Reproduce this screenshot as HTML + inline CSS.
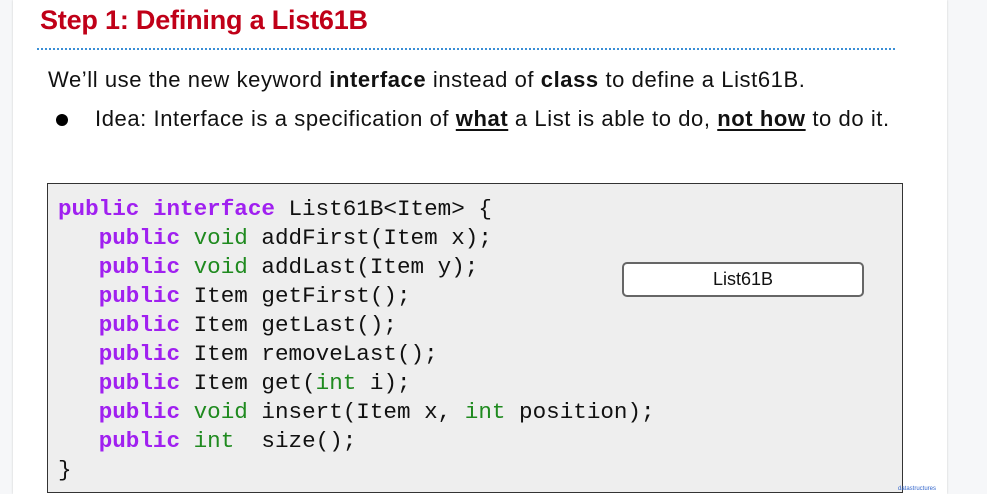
<!DOCTYPE html>
<html><head><meta charset="utf-8"><style>
html,body{margin:0;padding:0;}
body{width:987px;height:494px;background:#f6f7f9;position:relative;overflow:hidden;font-family:"Liberation Sans",sans-serif;}
.page{position:absolute;left:13px;top:0;width:934px;height:494px;background:#fff;box-shadow:0 0 2px #ccc;}
.title{position:absolute;left:40px;top:5px;color:#c00018;font-weight:bold;font-size:27px;letter-spacing:-0.2px;}
.dots{position:absolute;left:37px;top:48px;width:858px;border-top:2px dotted #3a8fd6;}
.t1{position:absolute;left:48px;top:67px;font-size:22px;letter-spacing:0.58px;color:#111;white-space:nowrap;}
.t2{position:absolute;left:95px;top:106px;font-size:22px;letter-spacing:0.58px;color:#111;white-space:nowrap;}
.bul{position:absolute;left:56px;top:114px;width:12px;height:12px;border-radius:50%;background:#000;}
u{text-decoration-thickness:2px;text-underline-offset:3px;}
.code{position:absolute;left:47px;top:183px;width:854px;height:308px;background:#eee;border:1px solid #333;}
pre{margin:0;position:absolute;left:10px;top:11px;font-family:"Liberation Mono",monospace;font-size:22.6px;line-height:29px;color:#111;}
.k{color:#a020f0;font-weight:bold;}
.g{color:#1f8a1f;}
.box{position:absolute;left:622px;top:262px;width:238px;height:31px;border:2px solid #666;border-radius:5px;background:#fff;text-align:center;font-size:18px;line-height:31px;color:#111;}
.foot{position:absolute;left:898px;top:486px;font-size:6px;color:#36c;}
</style></head><body>
<div class="page"></div>
<div class="title">Step 1: Defining a List61B</div>
<div class="dots"></div>
<div class="t1">We’ll use the new keyword <b>interface</b> instead of <b>class</b> to define a List61B.</div>
<div class="bul"></div>
<div class="t2">Idea: Interface is a specification of <b><u>what</u></b> a List is able to do, <b><u>not how</u></b> to do it.</div>
<div class="code"><pre><span class="k">public interface</span> List61B&lt;Item&gt; {
   <span class="k">public</span> <span class="g">void</span> addFirst(Item x);
   <span class="k">public</span> <span class="g">void</span> addLast(Item y);
   <span class="k">public</span> Item getFirst();
   <span class="k">public</span> Item getLast();
   <span class="k">public</span> Item removeLast();
   <span class="k">public</span> Item get(<span class="g">int</span> i);
   <span class="k">public</span> <span class="g">void</span> insert(Item x, <span class="g">int</span> position);
   <span class="k">public</span> <span class="g">int</span>  size();
}</pre></div>
<div class="box">List61B</div>
<div class="foot">datastructures</div>
</body></html>
